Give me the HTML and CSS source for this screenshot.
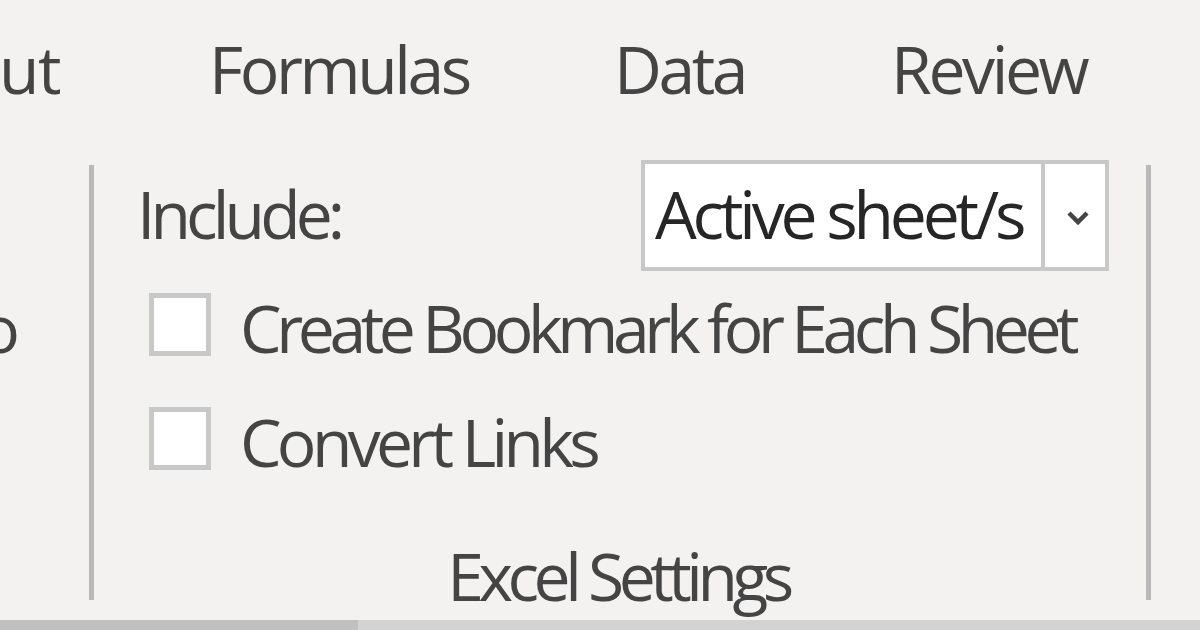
FILE: index.html
```html
<!DOCTYPE html>
<html>
<head>
<meta charset="utf-8">
<link rel="stylesheet" href="styles.css">
</head>
<body>
<div class="screen">
  <div class="tabs">
    <div class="tab tab-clip"><span>Page Layout</span></div>
    <div class="tab tab-formulas">Formulas</div>
    <div class="tab tab-data">Data</div>
    <div class="tab tab-review">Review</div>
  </div>
  <div class="ribbon">
    <div class="prev-group"><span>Info</span></div>
    <div class="sep"></div>
    <div class="group">
      <div class="row include-row">
        <span class="label label-include">Include:</span>
        <div class="dropdown">
          <span class="dd-text">Active sheet/s</span>
          <span class="dd-btn">
            <svg class="chev" width="24" height="16" viewBox="0 0 24 16"><polyline points="3,3 12,12 21,3" fill="none" stroke="#444" stroke-width="4.5"/></svg>
          </span>
        </div>
      </div>
      <label class="row check-row first-check">
        <span class="checkbox"></span>
        <span class="label label-create">Create Bookmark for Each Sheet</span>
      </label>
      <label class="row check-row">
        <span class="checkbox"></span>
        <span class="label label-convert">Convert Links</span>
      </label>
      <div class="group-title">Excel Settings</div>
    </div>
    <div class="sep"></div>
    <div class="rest"></div>
  </div>
  <div class="bottom">
    <div class="bottom-left"></div>
    <div class="bottom-right"></div>
  </div>
</div>
</body>
</html>
```
FILE: styles.css
```css
html, body {
  margin: 0;
  padding: 0;
}
body {
  background: #f3f2f1;
  font-family: "Open Sans", "Noto Sans", sans-serif;
  color: #444444;
}
.screen {
  width: 1200px;
  height: 630px;
  overflow: hidden;
  display: flex;
  flex-direction: column;
}
.tabs {
  height: 160px;
  display: flex;
  align-items: flex-start;
  font-size: 66px;
  line-height: 90px;
  padding-top: 23px;
  box-sizing: border-box;
  white-space: nowrap;
  letter-spacing: -3.4px;
}
.tab-clip {
  width: 60px;
  overflow: hidden;
  display: flex;
  justify-content: flex-end;
  letter-spacing: -1.5px;
}
.tab-formulas { margin-left: 149px; }
.tab-data { margin-left: 145px; }
.tab-review { margin-left: 146px; }

.ribbon {
  height: 460px;
  display: flex;
  align-items: flex-start;
}
.prev-group {
  width: 20px;
  margin-right: 69px;
  overflow: hidden;
  display: flex;
  justify-content: flex-end;
  font-size: 66px;
  line-height: 90px;
  margin-top: 122px;
  white-space: nowrap;
}
.sep {
  width: 5px;
  height: 435px;
  margin-top: 5px;
  background: #b8b8b8;
}
.group {
  width: 1052px;
  display: flex;
  flex-direction: column;
  padding-left: 43px;
  padding-right: 37px;
  box-sizing: border-box;
  font-size: 66px;
  white-space: nowrap;
  letter-spacing: -4.7px;
}
.row {
  display: flex;
  align-items: center;
}
.include-row {
  justify-content: space-between;
  height: 111px;
}
.label-include { letter-spacing: -4.9px; margin-top: -6px; }
.dropdown {
  width: 468px;
  height: 111px;
  box-sizing: border-box;
  border: 4px solid #c8c8c8;
  background: #ffffff;
  display: flex;
  align-items: center;
}
.dd-text {
  flex: 1;
  min-width: 0;
  overflow: hidden;
  padding-left: 10px;
  color: #262626;
  letter-spacing: -4.2px;
  margin-top: -6px;
}
.dd-btn {
  flex: none;
  width: 60px;
  height: 100%;
  border-left: 4px solid #c8c8c8;
  display: flex;
  align-items: center;
  justify-content: center;
}
.chev {
  margin-left: 6px;
  margin-top: 4px;
}
.check-row {
  padding-left: 12px;
  gap: 29px;
  height: 63px;
}
.first-check { margin-top: 22px; }
.check-row + .check-row { margin-top: 51px; }
.check-row .label { margin-top: 4px; }
.label-create { letter-spacing: -5.4px; }
.label-convert { letter-spacing: -4.7px; }
.checkbox {
  width: 62px;
  height: 63px;
  box-sizing: border-box;
  border: 5px solid #c8c8c8;
  background: #ffffff;
  flex: none;
}
.group-title {
  margin-top: 60px;
  padding-right: 10px;
  text-align: center;
  line-height: 90px;
  letter-spacing: -5.5px;
}
.rest { flex: 1; }

.bottom {
  height: 10px;
  display: flex;
}
.bottom-left {
  width: 358px;
  background: #c0c0c0;
}
.bottom-right {
  flex: 1;
  background: #d3d3d3;
}
```
